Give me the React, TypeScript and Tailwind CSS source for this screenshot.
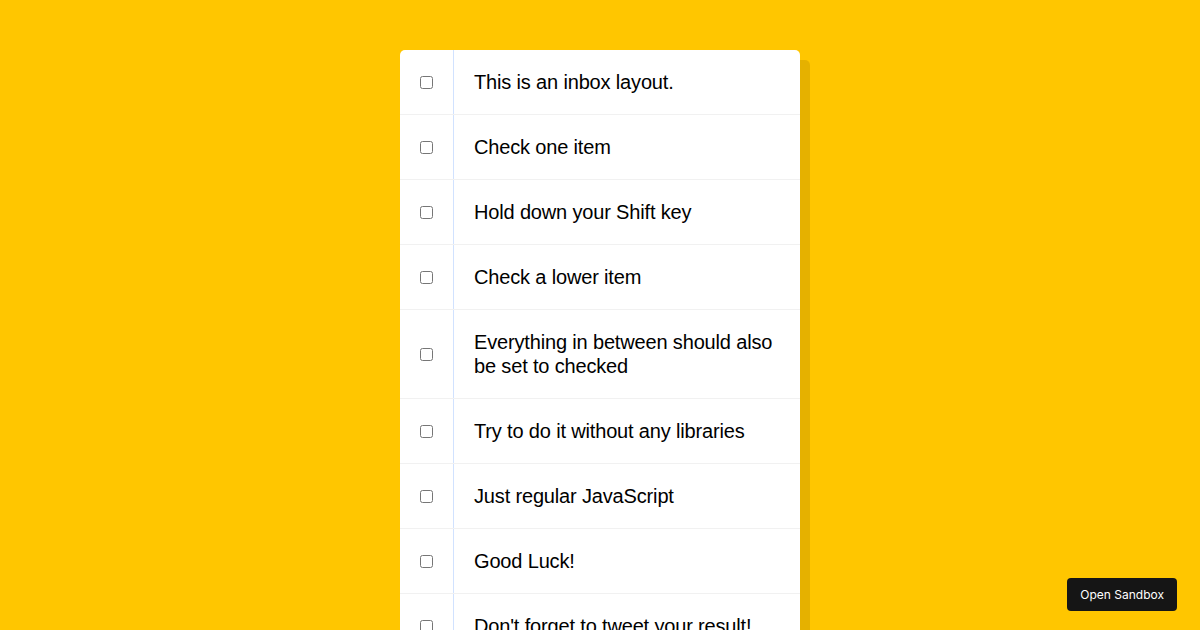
const ITEMS = [
  'This is an inbox layout.',
  'Check one item',
  'Hold down your Shift key',
  'Check a lower item',
  'Everything in between should also be set to checked',
  'Try to do it without any libraries',
  'Just regular JavaScript',
  'Good Luck!',
  "Don't forget to tweet your result!",
]

export default function App() {
  return (
    <div className="min-h-screen bg-[#ffc600] py-[50px] font-['Liberation_Sans',Arial,sans-serif]">
      <div className="mx-auto max-w-[400px] rounded-[5px] bg-white shadow-[10px_10px_0_rgba(0,0,0,0.1)]">
        {ITEMS.map((text) => (
          <div key={text} className="flex items-center border-b border-[#f1f1f1]">
            <input type="checkbox" className="m-5" />
            <p className="m-0 flex-1 border-l border-[#d1e2ff] p-5 text-[20px] leading-6 font-extralight tracking-[-0.16px] text-black">
              {text}
            </p>
          </div>
        ))}
      </div>

      {/* sandbox button overlay */}
      <a
        href="#"
        className="fixed right-[23px] bottom-[19px] flex h-[33px] items-center rounded-[4px] bg-[#151515] px-[13px] font-['Inter',sans-serif] text-[12px] text-white"
      >
        Open Sandbox
      </a>
    </div>
  )
}
